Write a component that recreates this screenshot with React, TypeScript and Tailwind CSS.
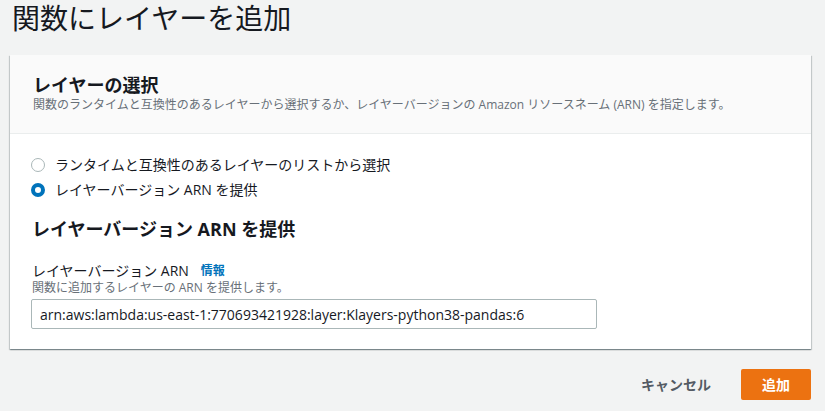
import { useState } from 'react';

const font = { fontFamily: '"Open Sans", "Noto Sans CJK JP", sans-serif' };

export default function App() {
  const [mode, setMode] = useState<'list' | 'arn'>('arn');
  const [arn, setArn] = useState('arn:aws:lambda:us-east-1:770693421928:layer:Klayers-python38-pandas:6');

  const radio = (value: 'list' | 'arn', label: string) => (
    <label className="flex h-[25px] cursor-pointer items-center gap-[10px]" onClick={() => setMode(value)}>
      {mode === value ? (
        <span className="box-border h-[14px] w-[14px] rounded-full border-[4px] border-[#0073bb] bg-white" />
      ) : (
        <span className="box-border h-[14px] w-[14px] rounded-full border-[1.5px] border-[#aab7b8] bg-white" />
      )}
      <span className="text-[14px] text-[#16191f]">{label}</span>
    </label>
  );

  return (
    <div className="h-[411px] w-[825px] overflow-hidden bg-[#f2f3f3] pl-[10px] pr-[14px]" style={font}>
      <h1 className="h-[55px] pl-[2px] text-[28px] font-normal leading-[36px] text-[#16191f]">
        関数にレイヤーを追加
      </h1>

      <div className="bg-white shadow-[0_1px_1px_0_rgba(0,28,36,0.3),1px_1px_1px_0_rgba(0,28,36,0.15),-1px_1px_1px_0_rgba(0,28,36,0.15)]">
        <div className="h-[79px] border-b border-[#eaeded] bg-[#fafafa] px-[23px] pt-[18px]">
          <h2 className="text-[18px] font-bold leading-[24px] text-[#16191f]">レイヤーの選択</h2>
          <p className="text-[12px] leading-[16px] text-[#687078]">
            関数のランタイムと互換性のあるレイヤーから選択するか、レイヤーバージョンの Amazon リソースネーム (ARN) を指定します。
          </p>
        </div>

        <div className="px-[21px] pb-[20px] pt-[18px]">
          {radio('list', 'ランタイムと互換性のあるレイヤーのリストから選択')}
          {radio('arn', 'レイヤーバージョン ARN を提供')}

          <h3 className="mt-[15px] pl-[1px] text-[18px] font-bold leading-[24px] text-[#16191f]">
            レイヤーバージョン ARN を提供
          </h3>

          <div className="mt-[21px] flex items-center gap-[12px] pl-[1px] text-[14px] leading-[18px]">
            <span className="text-[#16191f]">レイヤーバージョン ARN</span>
            <a className="text-[12px] font-bold text-[#0073bb]" href="#">情報</a>
          </div>
          <p className="pl-[1px] text-[12px] leading-[16px] text-[#687078]">関数に追加するレイヤーの ARN を提供します。</p>

          <input
            className="mt-[3px] h-[30px] w-[566px] rounded-[2px] border border-[#aab7b8] px-[8px] text-[14px] text-[#16191f] outline-none"
            value={arn}
            onChange={(e) => setArn(e.target.value)}
          />
        </div>
      </div>

      <div className="mt-[20px] flex items-center justify-end gap-[30px]">
        <button className="text-[14px] font-bold text-[#545b64]">キャンセル</button>
        <button className="h-[31px] w-[70px] rounded-[2px] bg-[#ec7211] text-[14px] font-bold text-white">追加</button>
      </div>
    </div>
  );
}
